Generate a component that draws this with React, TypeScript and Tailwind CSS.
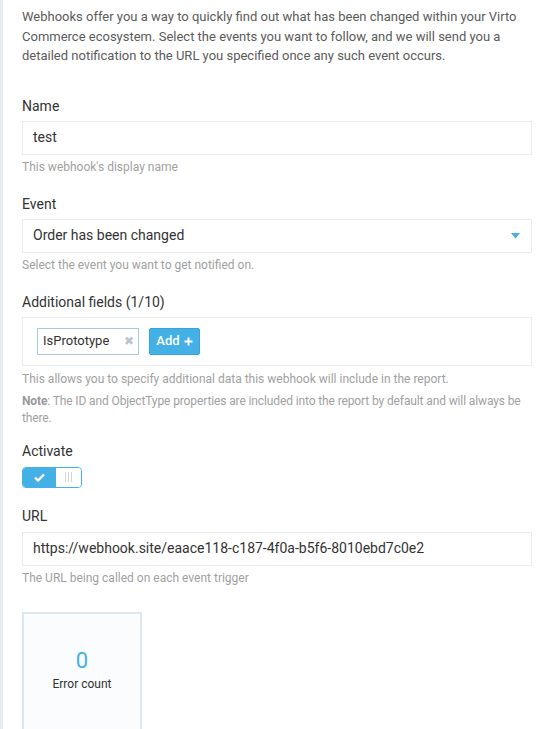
import React from "react";

const font = { fontFamily: "Roboto, 'Noto Sans', Arial, sans-serif" };

function Label({ children, className = "" }: { children: React.ReactNode; className?: string }) {
  return <p className={`text-[14px] leading-[20px] text-[#333] ${className}`}>{children}</p>;
}

function Hint({ children, className = "" }: { children: React.ReactNode; className?: string }) {
  return <p className={`text-[12px] leading-[17px] text-[#a1a1a1] ${className}`}>{children}</p>;
}

function TextBox({ value, className = "" }: { value: string; className?: string }) {
  return (
    <div
      className={`h-[34px] border border-[#e8ebf1] bg-white flex items-center px-[10px] text-[14px] text-[#333] ${className}`}
    >
      {value}
    </div>
  );
}

export default function App() {
  return (
    <div className="w-[537px] h-[729px] overflow-hidden bg-white flex" style={font}>
      {/* left rail */}
      <div className="w-[3px] shrink-0 bg-[#e7ecf3]" />

      <div className="flex-1 pl-[19px] pr-[5px] pt-[7px]">
        <p className="text-[13px] leading-[19.5px] text-[#5b5b5b]">
          Webhooks offer you a way to quickly find out what has been changed within your Virto
          Commerce ecosystem. Select the events you want to follow, and we will send you a
          detailed notification to the URL you specified once any such event occurs.
        </p>

        {/* Name */}
        <Label className="mt-[30px]">Name</Label>
        <TextBox value="test" className="mt-[5px]" />
        <Hint className="mt-[4px]">This webhook's display name</Hint>

        {/* Event */}
        <Label className="mt-[18px]">Event</Label>
        <div className="mt-[5px] h-[34px] border border-[#e8ebf1] bg-white flex items-center px-[10px] text-[14px] text-[#333]">
          <span className="flex-1">Order has been changed</span>
          <svg width="9" height="6" viewBox="0 0 9 6" className="mr-[1px]">
            <path d="M0 0 H9 L4.5 5.5 Z" fill="#43b0e6" />
          </svg>
        </div>
        <Hint className="mt-[4px]">Select the event you want to get notified on.</Hint>

        {/* Additional fields */}
        <Label className="mt-[18px]">Additional fields (1/10)</Label>
        <div className="mt-[5px] h-[49px] border border-[#e8ebf1] bg-white flex items-center pl-[14px] gap-[10px]">
          <div className="h-[27px] w-[102px] border border-[#a9c9d9] flex items-center pl-[5px] pr-[4px] text-[13px] text-[#333]">
            <span className="flex-1">IsPrototype</span>
            <span className="text-[12px] text-[#b4c6d1] leading-none">✖</span>
          </div>
          <div className="h-[27px] w-[51px] bg-[#43b0e6] border border-[#3aa3d8] rounded-[2px] flex items-center justify-center text-[13px] font-medium text-white">
            Add
            <svg width="9" height="9" viewBox="0 0 9 9" className="ml-[4px]">
              <path d="M4.5 0.5 V8.5 M0.5 4.5 H8.5" stroke="#fff" strokeWidth="2" />
            </svg>
          </div>
        </div>
        <Hint className="mt-[5px]">This allows you to specify additional data this webhook will include in the report.</Hint>
        <p className="mt-[5px] text-[12px] leading-[17px] text-[#a1a1a1] tracking-[-0.12px]">
          <b className="font-bold text-[#999]">Note</b>: The ID and ObjectType properties are included into the report by default and will always be there.
        </p>

        {/* Activate */}
        <Label className="mt-[14px]">Activate</Label>
        <div className="mt-[6px] w-[60px] h-[21px] rounded-[4px] border border-[#43b0e6] flex overflow-hidden">
          <div className="w-[33px] bg-[#43b0e6] flex items-center justify-center">
            <svg width="11" height="9" viewBox="0 0 11 9">
              <path d="M1 4.5 L4 7.5 L10 1.5" stroke="#fff" strokeWidth="2.4" fill="none" />
            </svg>
          </div>
          <div className="flex-1 bg-white rounded-l-[4px] flex items-center justify-center">
            <svg width="7" height="10" viewBox="0 0 7 10">
              <path d="M0.5 0 V10 M3.5 0 V10 M6.5 0 V10" stroke="#d4d4d4" strokeWidth="1" />
            </svg>
          </div>
        </div>

        {/* URL */}
        <Label className="mt-[18px]">URL</Label>
        <TextBox value="https://webhook.site/eaace118-c187-4f0a-b5f6-8010ebd7c0e2" className="mt-[6px]" />
        <Hint className="mt-[4px]">The URL being called on each event trigger</Hint>

        {/* stats */}
        <div className="mt-[25px] w-[120px] h-[140px] border-2 border-[#dde7ef] bg-[#fafcfe] flex flex-col items-center pt-[34px]">
          <span className="text-[22px] leading-[26px] text-[#43b0e6]">0</span>
          <span className="mt-[2px] text-[12px] leading-[16px] text-[#333]">Error count</span>
        </div>
      </div>
    </div>
  );
}
